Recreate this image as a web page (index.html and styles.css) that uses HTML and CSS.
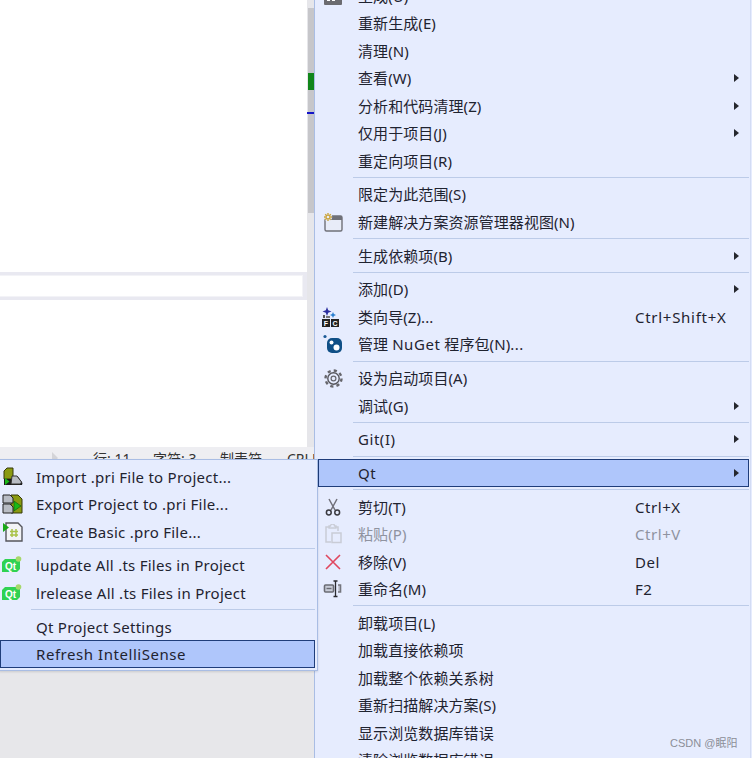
FILE: index.html
```html
<!DOCTYPE html>
<html lang="zh">
<head>
<meta charset="utf-8">
<title>Qt context menu</title>
<link rel="stylesheet" href="styles.css">
</head>
<body>
<div class="window">
  <div class="left-pane">
    <div class="editor">
      <div class="doc">
        <div class="doc-top"></div>
        <div class="find-band"><div class="find-input"></div></div>
      </div>
      <div class="scrollbar">
        <div class="thumb">
          <span class="mark-green"></span>
          <span class="mark-blue"></span>
        </div>
      </div>
    </div>
    <div class="status">
      <span class="status-arrow"></span>
      <span class="st st-line">行: 11</span>
      <span class="st st-char">字符: 3</span>
      <span class="st st-tab">制表符</span>
      <span class="st">CRLF</span>
    </div>
  </div>
</div>

<div class="menu main-menu">
  <div class="row"><span class="ic"><svg width="18" height="18" viewBox="0 0 18 18"><rect x="0" y="2" width="18" height="16" rx="1" fill="#6b6b70"/><rect x="3" y="11" width="3" height="3" fill="#fff"/><rect x="8" y="11" width="3" height="3" fill="#fff"/></svg></span><span class="lb">生成(U)</span></div>
  <div class="row"><span class="ic"></span><span class="lb">重新生成(E)</span></div>
  <div class="row"><span class="ic"></span><span class="lb">清理(N)</span></div>
  <div class="row"><span class="ic"></span><span class="lb">查看(W)</span><span class="sc"></span><i class="arrow"></i></div>
  <div class="row"><span class="ic"></span><span class="lb">分析和代码清理(Z)</span><span class="sc"></span><i class="arrow"></i></div>
  <div class="row"><span class="ic"></span><span class="lb">仅用于项目(J)</span><span class="sc"></span><i class="arrow"></i></div>
  <div class="row"><span class="ic"></span><span class="lb">重定向项目(R)</span></div>
  <div class="sep"></div>
  <div class="row"><span class="ic"></span><span class="lb">限定为此范围(S)</span></div>
  <div class="row"><span class="ic"><svg width="20" height="20" viewBox="0 0 20 20"><rect x="2" y="4" width="17" height="15" rx="1.5" fill="#e8ecf8" stroke="#6f7078" stroke-width="1.4"/><rect x="2" y="4" width="17" height="4" fill="#6f7078"/><circle cx="5" cy="5" r="4.2" fill="#e8ecf8"/><path d="M5 1v8M1 5h8M2.2 2.2l5.6 5.6M7.8 2.2L2.2 7.8" stroke="#c9a33c" stroke-width="1.4"/><circle cx="5" cy="5" r="1.3" fill="#e8ecf8"/></svg></span><span class="lb">新建解决方案资源管理器视图(N)</span></div>
  <div class="sep"></div>
  <div class="row"><span class="ic"></span><span class="lb">生成依赖项(B)</span><span class="sc"></span><i class="arrow"></i></div>
  <div class="sep"></div>
  <div class="row"><span class="ic"></span><span class="lb">添加(D)</span><span class="sc"></span><i class="arrow"></i></div>
  <div class="row"><span class="ic ic-left"><svg width="18" height="20" viewBox="0 0 18 20"><path d="M5 0l1.2 3.3L9.5 4.5 6.2 5.7 5 9 3.800 5.700.5 4.500l3.300-1.200z" fill="#2c2f9e"/><path d="M11 5l.9 2.100 2.100.9-2.100.9-.9 2.100-.9-2.100L8 8l2.100-.9z" fill="#2a7fd0"/><rect x="1" y="8" width="2" height="3" fill="#555"/><rect x="4" y="9" width="4" height="2" fill="#777"/><rect x="0" y="12" width="8" height="8" fill="#222"/><rect x="9" y="12" width="8" height="8" fill="#222"/><text x="4" y="19" class="ic-letter">F</text><text x="13" y="19" class="ic-letter">C</text></svg></span><span class="lb">类向导(Z)...</span><span class="sc shortcut-long">Ctrl+Shift+X</span></div>
  <div class="row"><span class="ic"><svg width="20" height="20" viewBox="0 0 20 20"><circle cx="2" cy="2.500" r="1.600" fill="#1b5a96"/><rect x="4" y="4" width="15" height="15" rx="5" fill="#0f4f86"/><circle cx="8.500" cy="8.500" r="2" fill="#fff"/><circle cx="13.500" cy="13.500" r="3" fill="#fff"/></svg></span><span class="lb">管理 <span class="wide">NuGet</span> 程序包(N)<span class="wide">...</span></span></div>
  <div class="sep"></div>
  <div class="row"><span class="ic"><svg width="19" height="19" viewBox="0 0 19 19"><circle cx="9.500" cy="9.500" r="8" fill="none" stroke="#66666c" stroke-width="2.400" stroke-dasharray="3.200 3.080"/><circle cx="9.500" cy="9.500" r="5.700" fill="#e6ecfe" stroke="#55555b" stroke-width="1.400"/><circle cx="9.500" cy="9.500" r="2.400" fill="#e6ecfe" stroke="#66666c" stroke-width="1.200"/></svg></span><span class="lb">设为启动项目(A)</span></div>
  <div class="row"><span class="ic"></span><span class="lb">调试(G)</span><span class="sc"></span><i class="arrow"></i></div>
  <div class="sep"></div>
  <div class="row"><span class="ic"></span><span class="lb wide">Git(I)</span><span class="sc"></span><i class="arrow"></i></div>
  <div class="sep"></div>
  <div class="row active"><span class="ic"></span><span class="lb wide">Qt</span><span class="sc"></span><i class="arrow"></i></div>
  <div class="sep"></div>
  <div class="row"><span class="ic"><svg width="16" height="18" viewBox="0 0 16 18"><path d="M4 1l6 11M12 1L6 12" stroke="#70707a" stroke-width="1.500" fill="none"/><circle cx="3.800" cy="14.500" r="2.400" fill="none" stroke="#3a3a40" stroke-width="1.500"/><circle cx="12.200" cy="14.500" r="2.400" fill="none" stroke="#3a3a40" stroke-width="1.500"/></svg></span><span class="lb">剪切(T)</span><span class="sc wide">Ctrl+X</span></div>
  <div class="row disabled"><span class="ic"><svg width="18" height="20" viewBox="0 0 18 20"><path d="M6 3H2v15h5" fill="none" stroke="#c9ccd6" stroke-width="1.500"/><path d="M11 3h3v4" fill="none" stroke="#c9ccd6" stroke-width="1.500"/><path d="M5 4V2h1.500a2 2 0 0 1 4 0H12v2z" fill="none" stroke="#c9ccd6" stroke-width="1.300"/><rect x="8" y="9" width="9" height="9.500" fill="none" stroke="#c9ccd6" stroke-width="1.500"/></svg></span><span class="lb">粘贴(P)</span><span class="sc wide">Ctrl+V</span></div>
  <div class="row"><span class="ic"><svg width="16" height="16" viewBox="0 0 16 16"><path d="M1 1l14 14M15 1L1 15" stroke="#e0475f" stroke-width="1.600"/></svg></span><span class="lb">移除(V)</span><span class="sc wide">Del</span></div>
  <div class="row"><span class="ic"><svg width="20" height="18" viewBox="0 0 20 18"><path d="M15 5h2.500v7H15" fill="#c8ccd8" stroke="#74757d" stroke-width="1.600"/><rect x="1.500" y="5" width="9" height="7" rx="1" fill="#c8ccd8" stroke="#6a6b73" stroke-width="1.600"/><path d="M3.500 8.500h5" stroke="#6a6b73" stroke-width="1.400"/><path d="M10.500 1h4M10.500 16.500h4M12.500 1v15.500" fill="none" stroke="#2b2b30" stroke-width="1.300"/></svg></span><span class="lb">重命名(M)</span><span class="sc wide">F2</span></div>
  <div class="sep"></div>
  <div class="row"><span class="ic"></span><span class="lb">卸载项目(L)</span></div>
  <div class="row"><span class="ic"></span><span class="lb">加载直接依赖项</span></div>
  <div class="row"><span class="ic"></span><span class="lb">加载整个依赖关系树</span></div>
  <div class="row"><span class="ic"></span><span class="lb">重新扫描解决方案(S)</span></div>
  <div class="row"><span class="ic"></span><span class="lb">显示浏览数据库错误</span></div>
  <div class="row"><span class="ic"></span><span class="lb">清除浏览数据库错误</span></div>
</div>

<div class="menu sub-menu">
  <div class="row"><span class="ic"><svg width="21" height="20" viewBox="0 0 21 20"><path d="M2 4l3-3h6v11H2z" fill="#8a9a12" stroke="#35380a" stroke-width="1"/><path d="M2 12v6h18l.5-2-5-7h-4l-2 3z" fill="#1c1c1c"/><path d="M10 9h5l4.500 6-1 2H9z" fill="#b8bcc4" stroke="#333" stroke-width="1"/><path d="M3 11l4.500 3.500L3 18z" fill="#18b818"/></svg></span><span class="lb">Import .pri File to Project...</span></div>
  <div class="row"><span class="ic"><svg width="21" height="20" viewBox="0 0 21 20"><path d="M9 1h7l4 4v14H9z" fill="#8a9a12" stroke="#35380a" stroke-width="1"/><path d="M1 1h7l3 3v5H1z" fill="#b8bcc4" stroke="#222" stroke-width="1"/><path d="M1 10h7l3 3v6H1z" fill="#b8bcc4" stroke="#222" stroke-width="1"/><path d="M12 7l7 5-7 5z" fill="#18b818" stroke="#0b5a0b" stroke-width=".6"/></svg></span><span class="lb">Export Project to .pri File...</span></div>
  <div class="row"><span class="ic"><svg width="21" height="20" viewBox="0 0 21 20"><path d="M4 1h12l4 4v14H4z" fill="#f2f3f6" stroke="#55565c" stroke-width="1.400"/><path d="M10 7v8M14 7v8M8 9.500h8M8 13h8" stroke="#a9c246" stroke-width="1.500"/><path d="M1 1l6 4.500L1 10z" fill="#18a818"/></svg></span><span class="lb">Create Basic .pro File...</span></div>
  <div class="sep"></div>
  <div class="row"><span class="ic"><svg width="20" height="18" viewBox="0 0 20 18"><path d="M3 3h15v10l-3 3H0V6z" fill="#2fd252"/><circle cx="16.500" cy="3" r="2.800" fill="#a6d86a"/><text x="8.500" y="13.500" class="ic-qt">Qt</text></svg></span><span class="lb">lupdate All .ts Files in Project</span></div>
  <div class="row"><span class="ic"><svg width="20" height="18" viewBox="0 0 20 18"><path d="M3 3h15v10l-3 3H0V6z" fill="#2fd252"/><circle cx="16.500" cy="3" r="2.800" fill="#a6d86a"/><text x="8.500" y="13.500" class="ic-qt">Qt</text></svg></span><span class="lb">lrelease All .ts Files in Project</span></div>
  <div class="sep"></div>
  <div class="row"><span class="ic"></span><span class="lb">Qt Project Settings</span></div>
  <div class="row active"><span class="ic"></span><span class="lb wide">Refresh IntelliSense</span></div>
</div>

<div class="watermark">CSDN @眠阳</div>
</body>
</html>
```
FILE: styles.css
```css
* { box-sizing: border-box; }
html, body { margin: 0; height: 100%; }
body {
  width: 752px;
  height: 758px;
  position: relative;
  overflow: hidden;
  background: #e6ecfe;
  font-family: "Noto Sans", "Noto Sans CJK SC", sans-serif;
  color: #1f2330;
}
.window { display: flex; height: 758px; }
.left-pane {
  width: 315px;
  height: 100%;
  display: flex;
  flex-direction: column;
  background: #e7e7ea;
}
.editor { display: flex; height: 447px; background: #fff; }
.doc { width: 307px; }
.doc-top { height: 272px; }
.find-band {
  height: 28px;
  padding: 3px 4px 3px 0;
  background: #e9e9f1;
}
.find-input { height: 22px; background: #fff; border: 1px solid #f3f3f7; border-left: 0; }
.scrollbar { width: 8px; background: #e6e6ea; }
.thumb {
  position: relative;
  width: 6px;
  height: 205px;
  margin: 8px 0 0 1px;
  background: #c6c6ca;
}
.mark-green { position: absolute; left: 0; top: 65px; width: 6px; height: 17px; background: #11861a; }
.mark-blue { position: absolute; left: -1px; top: 104px; width: 7px; height: 2px; background: #1414c8; }
.status {
  display: flex;
  align-items: center;
  height: 22px;
  padding: 0 0 0 52px;
  background: #eeeef2;
  font-size: 14px;
  color: #333;
  white-space: nowrap;
  overflow: hidden;
}
.status-arrow {
  width: 0;
  height: 0;
  border-left: 6px solid #d4d4d8;
  border-top: 6px solid transparent;
  border-bottom: 6px solid transparent;
  margin-right: 35px;
}
.st { flex: none; }
.st-line { width: 60px; }
.st-char { width: 67px; }
.st-tab { width: 67px; }

.menu {
  position: absolute;
  background: #e6ecfe;
  font-size: 15px;
  line-height: 20px;
  white-space: nowrap;
}
.main-menu {
  left: 314px;
  top: -18px;
  width: 437px;
  padding: 0 1px 0 3px;
  letter-spacing: .08px;
  border-left: 1px solid #a9bde4;
  border-right: 1px solid #d3dcf4;
}
.sub-menu {
  left: -1px;
  top: 459px;
  width: 319px;
  height: 212px;
  padding: 3px 2px 0 0;
  letter-spacing: .26px;
  border: 1px solid #a9bde4;
  box-shadow: 0 1px 2px rgba(0, 0, 0, .12);
}
.row {
  display: flex;
  align-items: center;
  height: 27.5px;
  border: 1px solid transparent;
}
.row.active { background: #afc6fb; border-color: #1f3d7a; }
.row.disabled { color: #8f93a0; }
.ic {
  flex: none;
  width: 28px;
  margin-right: 11px;
  display: flex;
  justify-content: center;
  align-items: center;
}
.ic-left { justify-content: flex-start; padding-left: 3px; }
.sub-menu .ic { width: 22px; margin-right: 13px; }
.lb { flex: none; width: 277px; }
.sub-menu .lb { width: auto; }
.sc { flex: 1; }
.wide { letter-spacing: .55px; }
.shortcut-long { letter-spacing: .72px; }
.arrow {
  flex: none;
  width: 0;
  height: 0;
  margin-right: 9px;
  border-left: 5px solid #25272e;
  border-top: 4.500px solid transparent;
  border-bottom: 4.500px solid transparent;
}
.sep { height: 6.2px; padding-top: 2.600px; margin-left: 35px; }
.sep::before { content: ""; display: block; height: 1px; background: #bccbe8; }
.sub-menu .sep { margin-left: 31px; }
.ic-letter {
  font-family: "Liberation Sans", sans-serif;
  font-size: 7px;
  font-weight: 700;
  letter-spacing: 0;
  fill: #fff;
  text-anchor: middle;
}
.ic-qt {
  font-family: "Liberation Sans", sans-serif;
  font-size: 10px;
  font-weight: 700;
  letter-spacing: 0;
  fill: #fff;
  text-anchor: middle;
}
.watermark {
  position: absolute;
  left: 670px;
  top: 735px;
  font-family: "Liberation Sans", "Noto Sans CJK SC", sans-serif;
  font-size: 11px;
  line-height: 16px;
  color: #8b8e98;
  white-space: nowrap;
}
```
